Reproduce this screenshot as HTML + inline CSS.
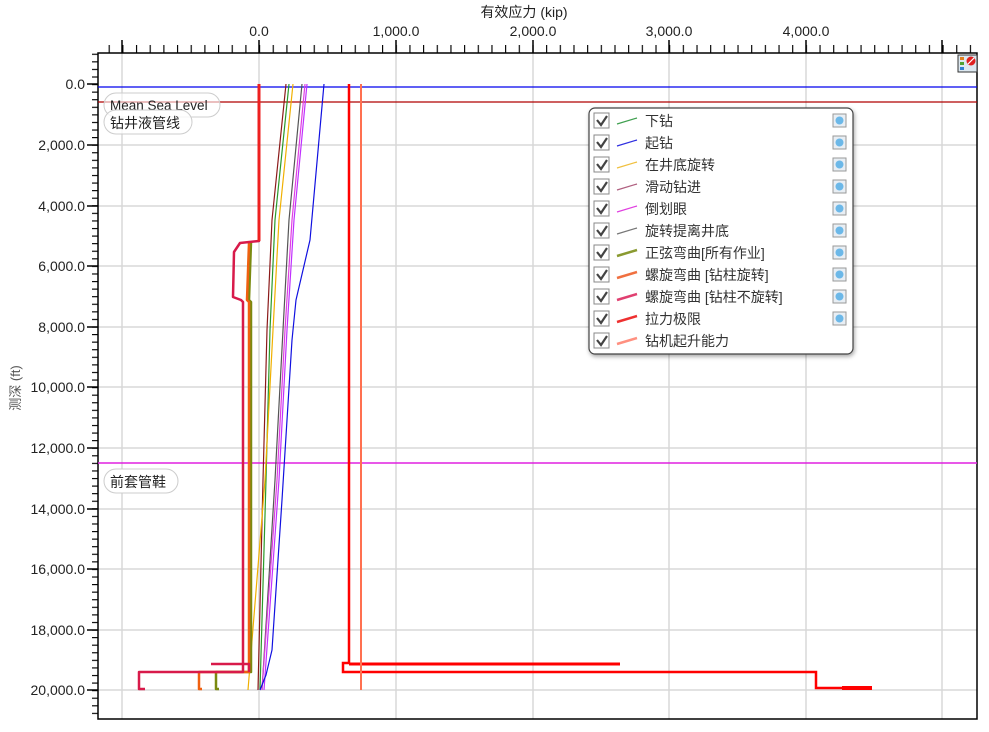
<!DOCTYPE html>
<html><head><meta charset="utf-8"><style>
html,body{margin:0;padding:0;background:#fff;width:989px;height:732px;overflow:hidden}
svg text{font-family:"Liberation Sans","Noto Sans CJK SC",sans-serif}
</style></head><body>
<svg width="989" height="732" viewBox="0 0 989 732" xmlns="http://www.w3.org/2000/svg">
<defs>
<pattern id="xt" patternUnits="userSpaceOnUse" x="259" y="45" width="13.67" height="8"><line x1="0.5" y1="0" x2="0.5" y2="8" stroke="#000" stroke-width="1.3"/></pattern>
<pattern id="yt" patternUnits="userSpaceOnUse" x="92" y="84" width="6" height="7.576"><line x1="0" y1="0.5" x2="6" y2="0.5" stroke="#000" stroke-width="1.3"/></pattern>
</defs>
<text x="524" y="17" font-size="14" text-anchor="middle" fill="#222">有效应力 (kip)</text>
<g font-size="14" fill="#222" text-anchor="middle">
<text x="259" y="36">0.0</text><text x="396" y="36">1,000.0</text><text x="533" y="36">2,000.0</text><text x="669" y="36">3,000.0</text><text x="806" y="36">4,000.0</text>
</g>
<g font-size="14" fill="#222" text-anchor="end">
<text x="85" y="89">0.0</text><text x="85" y="150">2,000.0</text><text x="85" y="211">4,000.0</text><text x="85" y="271">6,000.0</text><text x="85" y="332">8,000.0</text><text x="85" y="392">10,000.0</text><text x="85" y="453">12,000.0</text><text x="85" y="514">14,000.0</text><text x="85" y="574">16,000.0</text><text x="85" y="635">18,000.0</text><text x="85" y="695">20,000.0</text>
</g>
<text transform="translate(20,388) rotate(-90)" font-size="13" fill="#555" text-anchor="middle">测深 (ft)</text>
<rect x="98" y="45" width="879" height="8" fill="url(#xt)"/>
<rect x="92" y="53" width="6" height="666" fill="url(#yt)"/>
<g stroke="#000" stroke-width="1.5">
<line x1="122" y1="40" x2="122" y2="53"/><line x1="259" y1="40" x2="259" y2="53"/><line x1="396" y1="40" x2="396" y2="53"/><line x1="533" y1="40" x2="533" y2="53"/><line x1="669" y1="40" x2="669" y2="53"/><line x1="806" y1="40" x2="806" y2="53"/><line x1="942" y1="40" x2="942" y2="53"/>
<line x1="87" y1="84" x2="98" y2="84"/><line x1="87" y1="145" x2="98" y2="145"/><line x1="87" y1="206" x2="98" y2="206"/><line x1="87" y1="266" x2="98" y2="266"/><line x1="87" y1="327" x2="98" y2="327"/><line x1="87" y1="387" x2="98" y2="387"/><line x1="87" y1="448" x2="98" y2="448"/><line x1="87" y1="509" x2="98" y2="509"/><line x1="87" y1="569" x2="98" y2="569"/><line x1="87" y1="630" x2="98" y2="630"/><line x1="87" y1="690" x2="98" y2="690"/>
</g>
<g stroke="#d8d8d8" stroke-width="1.5">
<line x1="122" y1="53" x2="122" y2="719"/><line x1="259" y1="53" x2="259" y2="719"/><line x1="396" y1="53" x2="396" y2="719"/><line x1="533" y1="53" x2="533" y2="719"/><line x1="669" y1="53" x2="669" y2="719"/><line x1="806" y1="53" x2="806" y2="719"/><line x1="942" y1="53" x2="942" y2="719"/>
<line x1="98" y1="145" x2="977" y2="145"/><line x1="98" y1="206" x2="977" y2="206"/><line x1="98" y1="266" x2="977" y2="266"/><line x1="98" y1="327" x2="977" y2="327"/><line x1="98" y1="387" x2="977" y2="387"/><line x1="98" y1="448" x2="977" y2="448"/><line x1="98" y1="509" x2="977" y2="509"/><line x1="98" y1="569" x2="977" y2="569"/><line x1="98" y1="630" x2="977" y2="630"/><line x1="98" y1="690" x2="977" y2="690"/>
</g>
<rect x="98" y="53" width="879" height="666" fill="none" stroke="#000" stroke-width="1.5"/>
<line x1="98" y1="87" x2="977" y2="87" stroke="#0000ee" stroke-width="1.2"/>
<line x1="98" y1="102" x2="977" y2="102" stroke="#b00000" stroke-width="1.2"/>
<line x1="98" y1="463" x2="977" y2="463" stroke="#e020e0" stroke-width="1.5"/>
<rect x="104" y="93" width="116" height="24" rx="12" fill="#fff" fill-opacity="0.6" stroke="#ccc"/>
<text x="110" y="110" font-size="13.5" fill="#222">Mean Sea Level</text>
<rect x="104" y="110" width="88" height="24" rx="12" fill="#fff" fill-opacity="0.8" stroke="#ccc"/>
<text x="110" y="128" font-size="14" fill="#222">钻井液管线</text>
<rect x="104" y="469" width="74" height="24" rx="12" fill="#fff" stroke="#ccc"/>
<text x="110" y="487" font-size="14" fill="#222">前套管鞋</text>
<g fill="none" stroke-width="1.2" stroke-linejoin="round">
<path d="M286 84 L272 220 L267 330 L263 480 L258 690" stroke="#8b1a1a"/>
<path d="M289 84 L275 220 L270 330 L266 480 L260 690" stroke="#2a9a2a"/>
<path d="M293 84 L279 220 L273 330 L265 480 L248 690" stroke="#f0b000"/>
<path d="M302 84 L289 220 L283 330 L275 480 L262 690" stroke="#555"/>
<path d="M305 84 L292 220 L285 330 L277 480 L262 690" stroke="#e040e0"/>
<path d="M307 84 L294 220 L287 330 L279 480 L264 690" stroke="#c030ff"/>
<path d="M324 84 L310 240 L296 300 L292 340 L282 500 L272 650 L266 675 L260 690" stroke="#1010e0"/>
</g>
<g fill="none" stroke-width="2.5" stroke-linejoin="round">
<path d="M251 242 L249 300 L251 302 L251 672 L216 672 L216 689 L219 689" stroke="#7a8a10"/>
<path d="M249 243 L247 300 L249 302 L249 672 L199 672 L199 689 L202 689" stroke="#f06010"/>
<path d="M259 84 L259 241 L240 243 L234 252 L233 297 L241 300 L243 302 L243 672 L139 672 L139 689 L145 689" stroke="#d81a4a"/>
<path d="M211 664 L249 664 L249 672" stroke="#d81a4a"/>
</g>
<line x1="259" y1="84" x2="259" y2="241" stroke="#ee2020" stroke-width="3"/>
<path d="M349 84 L349 663 L343 663 L343 672 L816 672 L816 688 L872 688" fill="none" stroke="#ff0000" stroke-width="2.5"/>
<line x1="349" y1="664" x2="620" y2="664" stroke="#ff0000" stroke-width="3"/>
<line x1="842" y1="688" x2="872" y2="688" stroke="#ff0000" stroke-width="4"/>
<line x1="361" y1="84" x2="361" y2="690" stroke="#ff7050" stroke-width="2"/>
<rect x="958" y="55" width="19" height="17" fill="#dde8f0" stroke="#333"/>
<rect x="960" y="57" width="4" height="3" fill="#e08020"/><rect x="960" y="62" width="4" height="3" fill="#50a030"/><rect x="960" y="67" width="4" height="3" fill="#3080d0"/>
<circle cx="971" cy="61" r="4.5" fill="#e02020"/><line x1="968" y1="64" x2="974" y2="58" stroke="#fff" stroke-width="1.2"/>
<rect x="589" y="108" width="264" height="246" rx="6" fill="#fff" stroke="#444" stroke-width="1.2" style="filter:drop-shadow(1px 2px 2px rgba(0,0,0,.35))"/>
<g stroke="#888" fill="#fff"><rect x="594" y="113" width="15" height="15"/><rect x="594" y="135" width="15" height="15"/><rect x="594" y="157" width="15" height="15"/><rect x="594" y="179" width="15" height="15"/><rect x="594" y="201" width="15" height="15"/><rect x="594" y="223" width="15" height="15"/><rect x="594" y="245" width="15" height="15"/><rect x="594" y="267" width="15" height="15"/><rect x="594" y="289" width="15" height="15"/><rect x="594" y="311" width="15" height="15"/><rect x="594" y="333" width="15" height="15"/></g>
<g stroke="#444" stroke-width="2.2" fill="none"><path d="M597 120 l4 5 l6 -9"/><path d="M597 142 l4 5 l6 -9"/><path d="M597 164 l4 5 l6 -9"/><path d="M597 186 l4 5 l6 -9"/><path d="M597 208 l4 5 l6 -9"/><path d="M597 230 l4 5 l6 -9"/><path d="M597 252 l4 5 l6 -9"/><path d="M597 274 l4 5 l6 -9"/><path d="M597 296 l4 5 l6 -9"/><path d="M597 318 l4 5 l6 -9"/><path d="M597 340 l4 5 l6 -9"/></g>
<g fill="none">
<line x1="617" y1="124" x2="637" y2="118" stroke="#40a050" stroke-width="1.2"/>
<line x1="617" y1="146" x2="637" y2="140" stroke="#3030e0" stroke-width="1.2"/>
<line x1="617" y1="168" x2="637" y2="162" stroke="#f0c040" stroke-width="1.2"/>
<line x1="617" y1="190" x2="637" y2="184" stroke="#b06080" stroke-width="1.2"/>
<line x1="617" y1="212" x2="637" y2="206" stroke="#e040e0" stroke-width="1.2"/>
<line x1="617" y1="234" x2="637" y2="228" stroke="#777" stroke-width="1.2"/>
<line x1="617" y1="256" x2="637" y2="250" stroke="#8a9a30" stroke-width="2.5"/>
<line x1="617" y1="278" x2="637" y2="272" stroke="#f07040" stroke-width="2.5"/>
<line x1="617" y1="300" x2="637" y2="294" stroke="#e04070" stroke-width="2.5"/>
<line x1="617" y1="322" x2="637" y2="316" stroke="#ee3030" stroke-width="2.5"/>
<line x1="617" y1="344" x2="637" y2="338" stroke="#ff9080" stroke-width="2.5"/>
</g>
<g font-size="14" fill="#333">
<text x="645" y="126">下钻</text><text x="645" y="148">起钻</text><text x="645" y="170">在井底旋转</text><text x="645" y="192">滑动钻进</text><text x="645" y="214">倒划眼</text><text x="645" y="236">旋转提离井底</text><text x="645" y="258">正弦弯曲[所有作业]</text><text x="645" y="280">螺旋弯曲 [钻柱旋转]</text><text x="645" y="302">螺旋弯曲 [钻柱不旋转]</text><text x="645" y="324">拉力极限</text><text x="645" y="346">钻机起升能力</text>
</g>
<g stroke="#999" fill="#e8eef4"><rect x="833" y="114" width="13" height="13"/><rect x="833" y="136" width="13" height="13"/><rect x="833" y="158" width="13" height="13"/><rect x="833" y="180" width="13" height="13"/><rect x="833" y="202" width="13" height="13"/><rect x="833" y="224" width="13" height="13"/><rect x="833" y="246" width="13" height="13"/><rect x="833" y="268" width="13" height="13"/><rect x="833" y="290" width="13" height="13"/><rect x="833" y="312" width="13" height="13"/></g>
<g fill="#6cb8e8"><circle cx="839.5" cy="120.5" r="4"/><circle cx="839.5" cy="142.5" r="4"/><circle cx="839.5" cy="164.5" r="4"/><circle cx="839.5" cy="186.5" r="4"/><circle cx="839.5" cy="208.5" r="4"/><circle cx="839.5" cy="230.5" r="4"/><circle cx="839.5" cy="252.5" r="4"/><circle cx="839.5" cy="274.5" r="4"/><circle cx="839.5" cy="296.5" r="4"/><circle cx="839.5" cy="318.5" r="4"/></g>
</svg>
</body></html>
